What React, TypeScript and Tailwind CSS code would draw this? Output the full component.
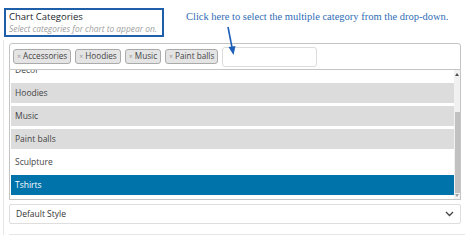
const tags = ['Accessories', 'Hoodies', 'Music', 'Paint balls'];

const options = [
  { label: 'Decor', state: 'none' },
  { label: 'Hoodies', state: 'selected' },
  { label: 'Music', state: 'selected' },
  { label: 'Paint balls', state: 'selected' },
  { label: 'Sculpture', state: 'none' },
  { label: 'Tshirts', state: 'active' },
];

function rowClass(state: string) {
  if (state === 'selected') return 'bg-[#dcdcdc] text-[#444]';
  if (state === 'active') return 'bg-[#0073aa] text-white';
  return 'bg-white text-[#444]';
}

export default function App() {
  return (
    <div className="relative w-[474px] h-[248px] overflow-hidden bg-white font-['Open_Sans',sans-serif]">
      <div className="flex items-start pt-[8px] pl-[4px]">
        <div className="w-[160px] h-[29px] border-2 border-[#1f5ea8] px-[3px] leading-none">
          <div className="text-[9.5px] text-[#23282d] mt-[2px]">Chart Categories</div>
          <div className="text-[8.4px] italic text-[#a0a0a0] mt-[3px] whitespace-nowrap">Select categories for chart to appear on.</div>
        </div>
        <div className="ml-[22px] mt-[1px] font-['Liberation_Serif',serif] text-[10.5px] text-[#2f6db5] whitespace-nowrap">
          Click here to select the multiple category from the drop-down.
        </div>
      </div>

      {/* arrow pointing at the search input */}
      <svg className="absolute left-[222px] top-[26px]" width="16" height="31" viewBox="0 0 16 31">
        <line x1="6" y1="1" x2="10.5" y2="24" stroke="#1d5fb8" strokeWidth="1.6" />
        <path d="M6.5 21 L11.5 29 L13.5 20 Z" fill="#1d5fb8" />
      </svg>

      <div className="ml-[3px] mt-[3px] border-l border-[#e6e6e6] pl-[5px] pt-[3px]">
        <div className="w-[452px] h-[27px] border border-[#c4c4c4] rounded-t-[3px] flex items-center gap-[4px] px-[3px]">
          {tags.map(t => (
            <div key={t} className="h-[15px] flex items-center px-[3px] bg-[#e4e4e4] border border-[#aaa] rounded-[3px] text-[8.2px] text-[#444] leading-none whitespace-nowrap">
              <span className="text-[#999] text-[7px] mr-[2px]">×</span>{t}
            </div>
          ))}
          <div className="w-[95px] h-[20px] border border-[#dcdcdc] rounded-[3px] bg-white" />
        </div>

        <div className="w-[452px] h-[130px] border border-t-0 border-[#c4c4c4] flex overflow-hidden">
          <div className="flex-1 mt-[-10px] pl-[1px]">
            {options.map(o => (
              <div key={o.label} className={`h-[20px] mb-[3px] flex items-center pl-[4px] text-[8.5px] ${rowClass(o.state)}`}>
                {o.label}
              </div>
            ))}
          </div>
          <div className="w-[6px] bg-[#f1f1f1] flex flex-col items-center">
            <div className="mt-[3px] w-0 h-0 border-l-[2px] border-r-[2px] border-b-[3px] border-l-transparent border-r-transparent border-b-[#505050]" />
            <div className="mt-[36px] w-[5px] h-[81px] bg-[#c1c1c1]" />
            <div className="mt-[1px] w-0 h-0 border-l-[2px] border-r-[2px] border-t-[3px] border-l-transparent border-r-transparent border-t-[#a0a0a0]" />
          </div>
        </div>

        <div className="mt-[4px] w-[452px] h-[20px] border border-[#dedede] rounded-[2px] flex items-center justify-between pl-[6px] pr-[6px]">
          <span className="text-[8.5px] text-[#333]">Default Style</span>
          <svg width="9" height="6" viewBox="0 0 9 6">
            <path d="M1 1 L4.5 4.5 L8 1" fill="none" stroke="#444" strokeWidth="1.3" />
          </svg>
        </div>

        <div className="mt-[10px] w-[456px] h-px bg-[#e6e6e6]" />
      </div>
    </div>
  );
}
